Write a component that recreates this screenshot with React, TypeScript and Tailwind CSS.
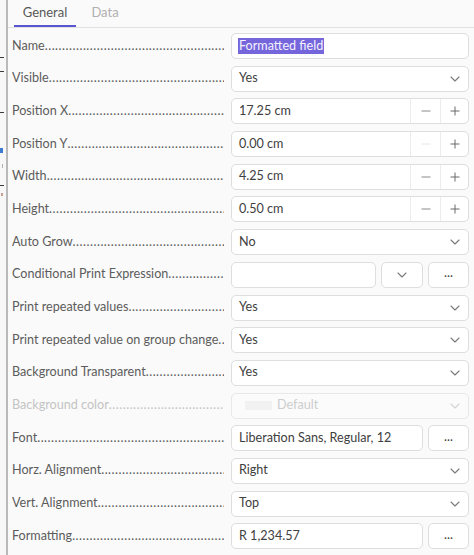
import React from "react";

const FONT = { fontFamily: 'Lato, "Liberation Sans", Arial, sans-serif' };

const DOTS = ".".repeat(100);

function Chevron({ light }: { light?: boolean }) {
  return (
    <svg width="10" height="6" viewBox="0 0 10 6" className="shrink-0">
      <path
        d="M1 1 L5 5 L9 1"
        fill="none"
        stroke={light ? "#d4d4d4" : "#7a7a7a"}
        strokeWidth="1.1"
        strokeLinecap="round"
        strokeLinejoin="round"
      />
    </svg>
  );
}

function Label({ text, disabled }: { text: string; disabled?: boolean }) {
  return (
    <div
      className={`w-[212px] shrink-0 flex items-center whitespace-nowrap overflow-hidden text-[12.6px] ${
        disabled ? "text-[#c4c4c4]" : "text-[#5c5c5c]"
      }`}
    >
      <span className="shrink-0">{text}</span>
      <span className="flex-1 overflow-hidden tracking-[0.5px]">{DOTS}</span>
    </div>
  );
}

function Box({ children, className = "" }: { children?: React.ReactNode; className?: string }) {
  return (
    <div
      className={`h-[26px] rounded-[5px] border border-[#dedede] bg-white flex items-center text-[12.6px] text-[#404040] ${className}`}
    >
      {children}
    </div>
  );
}

function Combo({ value }: { value: string }) {
  return (
    <Box className="flex-1 pl-[7px] pr-[8px] justify-between">
      <span>{value}</span>
      <Chevron />
    </Box>
  );
}

function Spin({ value, minusDisabled }: { value: string; minusDisabled?: boolean }) {
  return (
    <Box className="flex-1 overflow-hidden">
      <span className="flex-1 pl-[7px]">{value}</span>
      <div className="w-[30px] h-full border-l border-[#ececec] flex items-center justify-center">
        <svg width="10" height="10" viewBox="0 0 10 10">
          <path d="M0.5 5 H9.5" stroke={minusDisabled ? "#e6e6e6" : "#8a8a8a"} strokeWidth="1" />
        </svg>
      </div>
      <div className="w-[28px] h-full border-l border-[#ececec] flex items-center justify-center">
        <svg width="10" height="10" viewBox="0 0 10 10">
          <path d="M0.5 5 H9.5 M5 0.5 V9.5" stroke="#6a6a6a" strokeWidth="1" />
        </svg>
      </div>
    </Box>
  );
}

function DotsButton() {
  return (
    <Box className="w-[41px] shrink-0 justify-center text-[#9a9a9a] text-[11px]">
      <span className="-mt-[2px]">...</span>
    </Box>
  );
}

function Row({ label, disabled, children }: { label: string; disabled?: boolean; children: React.ReactNode }) {
  return (
    <div className="flex items-center gap-[7px] h-[26px]">
      <Label text={label} disabled={disabled} />
      <div className="flex-1 flex gap-[5px] items-center">{children}</div>
    </div>
  );
}

export default function App() {
  return (
    <div style={FONT} className="w-[474px] h-[555px] flex overflow-hidden bg-[#f6f6f6]">
      {/* strip of the neighbouring canvas */}
      <div className="relative w-[6px] h-full bg-[#f7f7f7]">
        <div className="absolute left-0 top-[57px] w-[4px] h-[1px] bg-[#3a3a3a]" />
        <div className="absolute left-0 top-[71px] w-[4px] h-[1px] bg-[#3a3a3a]" />
        <div className="absolute left-0 top-[112px] w-[4px] h-[1px] bg-[#3a3a3a]" />
        <div className="absolute left-0 top-[148px] w-[3px] h-[5px] bg-[#3d7bd0]" />
        <div className="absolute left-[2px] top-[164px] w-[1px] h-[4px] bg-[#b0b0b0]" />
        <div className="absolute left-0 top-[185px] w-[4px] h-[1px] bg-[#3a3a3a]" />
        <div className="absolute left-[1px] top-[193px] w-[2px] h-[3px] bg-[#c8a090]" />
      </div>
      <div className="w-[2px] h-full bg-[#b9b9b9]" />
      <div className="flex-1 bg-[#fafafa] flex flex-col">
        <div className="h-[28px] shrink-0 border-b border-[#e2e2e2] flex items-stretch pl-[6px] text-[13px]">
          <div className="relative w-[62px] flex items-center justify-center text-[#585858]">
            <span className="-mt-[2px]">General</span>
            <div className="absolute left-0 right-0 bottom-[0px] h-[2px] bg-[#5a55d0]" />
          </div>
          <div className="w-[58px] flex items-center justify-center text-[#b0b0b0]">
            <span className="-mt-[2px]">Data</span>
          </div>
        </div>
        <div className="flex flex-col gap-[6.69px] pt-[5px] pl-[4px] pr-[5px]">
          <Row label="Name">
            <Box className="flex-1 pl-[6px]">
              <span className="bg-[#7566dc] text-[#f4f2ff] px-[1px] leading-[16px]">Formatted field</span>
            </Box>
          </Row>
          <Row label="Visible">
            <Combo value="Yes" />
          </Row>
          <Row label="Position X">
            <Spin value="17.25 cm" />
          </Row>
          <Row label="Position Y">
            <Spin value="0.00 cm" minusDisabled />
          </Row>
          <Row label="Width">
            <Spin value="4.25 cm" />
          </Row>
          <Row label="Height">
            <Spin value="0.50 cm" />
          </Row>
          <Row label="Auto Grow">
            <Combo value="No" />
          </Row>
          <Row label="Conditional Print Expression">
            <Box className="flex-1" />
            <Box className="w-[42px] shrink-0 justify-center">
              <Chevron />
            </Box>
            <DotsButton />
          </Row>
          <Row label="Print repeated values">
            <Combo value="Yes" />
          </Row>
          <Row label="Print repeated value on group change">
            <Combo value="Yes" />
          </Row>
          <Row label="Background Transparent">
            <Combo value="Yes" />
          </Row>
          <Row label="Background color" disabled>
            <div className="flex-1 h-[26px] rounded-[5px] border border-[#e8e8e8] bg-[#fbfbfb] flex items-center justify-between pl-[13px] pr-[8px] text-[12.6px] text-[#cdcdcd]">
              <div className="flex items-center gap-[5px]">
                <div className="w-[27px] h-[9px] bg-[#f1f1f1]" />
                <span>Default</span>
              </div>
              <Chevron light />
            </div>
          </Row>
          <Row label="Font">
            <Box className="flex-1 pl-[7px]">Liberation Sans, Regular, 12</Box>
            <DotsButton />
          </Row>
          <Row label="Horz. Alignment">
            <Combo value="Right" />
          </Row>
          <Row label="Vert. Alignment">
            <Combo value="Top" />
          </Row>
          <Row label="Formatting">
            <Box className="flex-1 pl-[7px]">R 1,234.57</Box>
            <DotsButton />
          </Row>
        </div>
      </div>
    </div>
  );
}
